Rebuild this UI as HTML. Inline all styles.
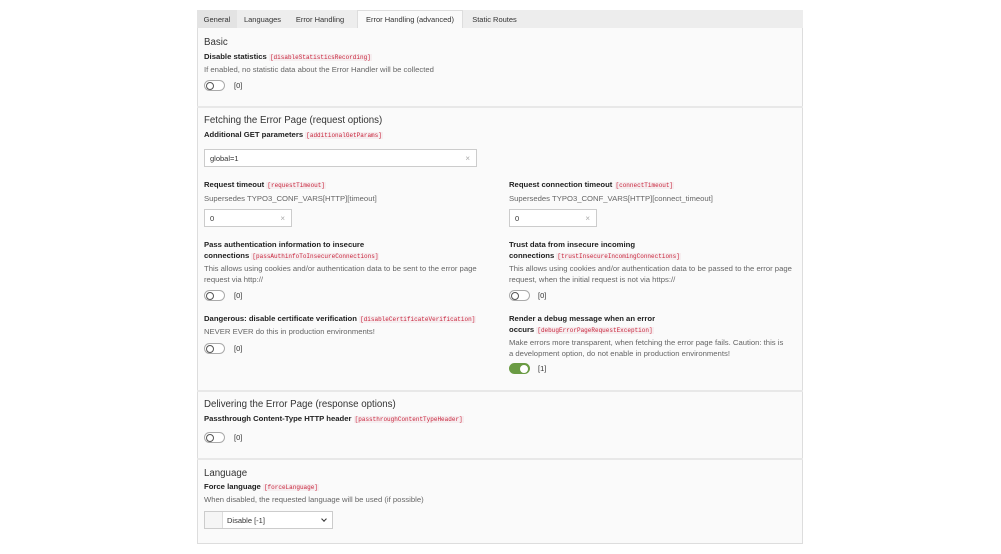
<!DOCTYPE html>
<html><head><meta charset="utf-8"><style>
*,*::after,*::before{box-sizing:border-box;margin:0;padding:0}
body{width:1001px;height:554px;background:#fff;font-family:"Liberation Sans",sans-serif;position:relative;overflow:hidden;color:#333}
.a{position:absolute;white-space:nowrap}
.tabs{position:absolute;left:197px;top:10px;width:606px;height:19px;background:#ededed;border-bottom:1px solid #ddd}
.tab{position:absolute;top:0;height:19px;font-size:7.5px;line-height:19px;color:#333;text-align:center}
.panel{position:absolute;left:197px;top:28px;width:606px;height:516px;background:#fafafa;border:1px solid #ddd;border-top:none}
.sep{position:absolute;left:197px;width:606px;height:2px;background:#e8e8e8}
h3{position:absolute;font-weight:normal;font-size:9.7px;color:#333;white-space:nowrap}
.l{position:absolute;font-weight:bold;font-size:7.7px;color:#222;white-space:nowrap;line-height:11px}
.c{font-family:"Liberation Mono",monospace;font-weight:normal;font-size:6px;color:#c8243b;background:#f6eef0;padding:0 1px}
.d{position:absolute;font-size:7.7px;color:#666;line-height:11px;white-space:nowrap}
.t{position:absolute;width:21px;height:11px;border:1px solid #aaa;border-radius:6px;background:#fff}
.t::after{content:"";position:absolute;left:1px;top:0.5px;width:8px;height:8px;border:1px solid #555;border-radius:50%;background:#fff}
.t.on{background:#6a9b43;border-color:#6a9b43}
.t.on::after{left:10px;border-color:#fff;background:#fff}
.v{position:absolute;font-size:7.5px;color:#333;line-height:11px}
.in{position:absolute;height:18px;background:#fff;border:1px solid #ccc;font-size:7.5px;line-height:17px;padding-left:5px;color:#333}
.in span{position:absolute;right:6px;top:0;color:#aaa;font-size:8px}
</style></head><body>
<div class="tabs">
<div class="tab" style="left:0;width:40px;background:#e3e3e3">General</div>
<div class="tab" style="left:40px;width:51px">Languages</div>
<div class="tab" style="left:91px;width:64px">Error Handling</div>
<div class="tab" style="left:160px;width:106px;background:#fafafa;border:1px solid #ddd;border-bottom:none;height:20px;line-height:17px">Error Handling (advanced)</div>
<div class="tab" style="left:266px;width:63px">Static Routes</div>
</div>
<div class="panel"></div>
<div class="sep" style="top:106px"></div>
<div class="sep" style="top:390px"></div>
<div class="sep" style="top:458px"></div>

<h3 style="left:204px;top:37px">Basic</h3>
<div class="l" style="left:204px;top:51px">Disable statistics <span class="c">[disableStatisticsRecording]</span></div>
<div class="d" style="left:204px;top:64px">If enabled, no statistic data about the Error Handler will be collected</div>
<div class="t" style="left:204px;top:80px"></div><div class="v" style="left:234px;top:80px">[0]</div>

<h3 style="left:204px;top:115px">Fetching the Error Page (request options)</h3>
<div class="l" style="left:204px;top:129px">Additional GET parameters <span class="c">[additionalGetParams]</span></div>
<div class="in" style="left:204px;top:149px;width:273px">global=1<span>×</span></div>

<div class="l" style="left:204px;top:179px">Request timeout <span class="c">[requestTimeout]</span></div>
<div class="d" style="left:204px;top:193px">Supersedes TYPO3_CONF_VARS[HTTP][timeout]</div>
<div class="in" style="left:204px;top:209px;width:88px">0<span>×</span></div>
<div class="l" style="left:509px;top:179px">Request connection timeout <span class="c">[connectTimeout]</span></div>
<div class="d" style="left:509px;top:193px">Supersedes TYPO3_CONF_VARS[HTTP][connect_timeout]</div>
<div class="in" style="left:509px;top:209px;width:88px">0<span>×</span></div>

<div class="l" style="left:204px;top:239px">Pass authentication information to insecure<br>connections <span class="c">[passAuthinfoToInsecureConnections]</span></div>
<div class="d" style="left:204px;top:263px">This allows using cookies and/or authentication data to be sent to the error page<br>request via http://</div>
<div class="t" style="left:204px;top:290px"></div><div class="v" style="left:234px;top:290px">[0]</div>
<div class="l" style="left:509px;top:239px">Trust data from insecure incoming<br>connections <span class="c">[trustInsecureIncomingConnections]</span></div>
<div class="d" style="left:509px;top:263px">This allows using cookies and/or authentication data to be passed to the error page<br>request, when the initial request is not via https://</div>
<div class="t" style="left:509px;top:290px"></div><div class="v" style="left:538px;top:290px">[0]</div>

<div class="l" style="left:204px;top:313px">Dangerous: disable certificate verification <span class="c">[disableCertificateVerification]</span></div>
<div class="d" style="left:204px;top:326px">NEVER EVER do this in production environments!</div>
<div class="t" style="left:204px;top:343px"></div><div class="v" style="left:234px;top:343px">[0]</div>
<div class="l" style="left:509px;top:313px">Render a debug message when an error<br>occurs <span class="c">[debugErrorPageRequestException]</span></div>
<div class="d" style="left:509px;top:337px">Make errors more transparent, when fetching the error page fails. Caution: this is<br>a development option, do not enable in production environments!</div>
<div class="t on" style="left:509px;top:363px"></div><div class="v" style="left:538px;top:363px">[1]</div>

<h3 style="left:204px;top:399px">Delivering the Error Page (response options)</h3>
<div class="l" style="left:204px;top:413px">Passthrough Content-Type HTTP header <span class="c">[passthroughContentTypeHeader]</span></div>
<div class="t" style="left:204px;top:432px"></div><div class="v" style="left:234px;top:432px">[0]</div>

<h3 style="left:204px;top:468px">Language</h3>
<div class="l" style="left:204px;top:481px">Force language <span class="c">[forceLanguage]</span></div>
<div class="d" style="left:204px;top:494px">When disabled, the requested language will be used (if possible)</div>
<div style="position:absolute;left:204px;top:511px;width:129px;height:18px;border:1px solid #ccc;background:#fff">
<div style="position:absolute;left:0;top:0;width:18px;height:16px;background:#f5f5f5;border-right:1px solid #ddd"></div>
<div class="a" style="left:22px;top:4px;font-size:7.5px;color:#333">Disable [-1]</div>
<div style="position:absolute;right:6px;top:5px;width:4px;height:4px;border-right:1.3px solid #333;border-bottom:1.3px solid #333;transform:rotate(45deg)"></div>
</div>
</body></html>
